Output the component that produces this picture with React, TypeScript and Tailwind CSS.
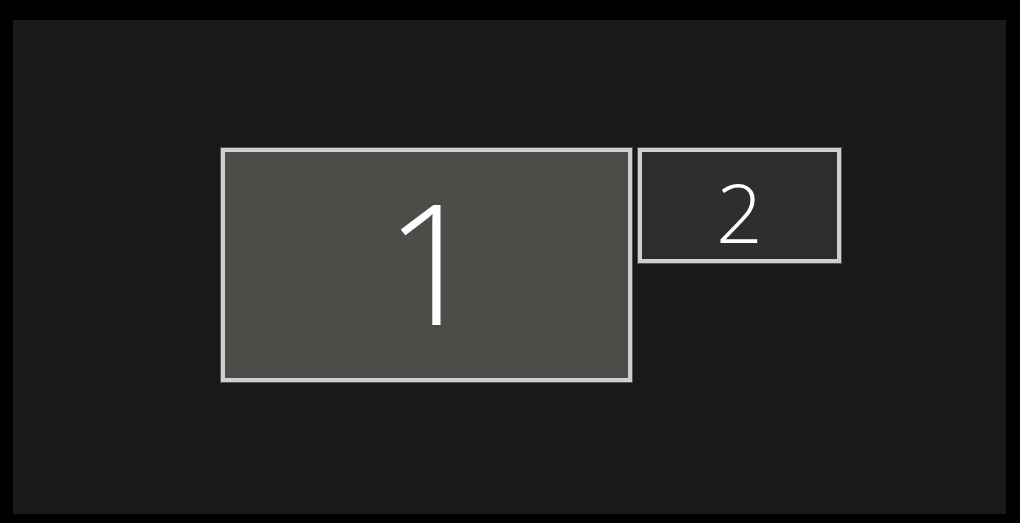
export default function App() {
  return (
    <div className="w-[1020px] h-[523px] bg-black pt-[20px] pl-[13px]">
      <div
        className="w-[993px] h-[494px] bg-[#191919] pl-[207px] pt-[127px] flex items-start gap-[4px]"
        style={{ fontFamily: '"Open Sans", "Noto Sans", sans-serif' }}
      >
        <div className="w-[413px] h-[236px] bg-[#555] p-px">
          <div className="w-full h-full border-4 border-[#cfcfcf] bg-[#4d4c48] flex items-center justify-center">
            <span className="text-white font-light text-[168px] leading-none -mt-[11px] ml-[12px]">1</span>
          </div>
        </div>
        <div className="w-[205px] h-[117px] bg-[#555] p-px">
          <div className="w-full h-full border-4 border-[#cfcfcf] bg-[#2e2e2e] flex items-center justify-center">
            <span className="text-white font-light text-[82px] leading-none mt-[10px]">2</span>
          </div>
        </div>
      </div>
    </div>
  );
}
